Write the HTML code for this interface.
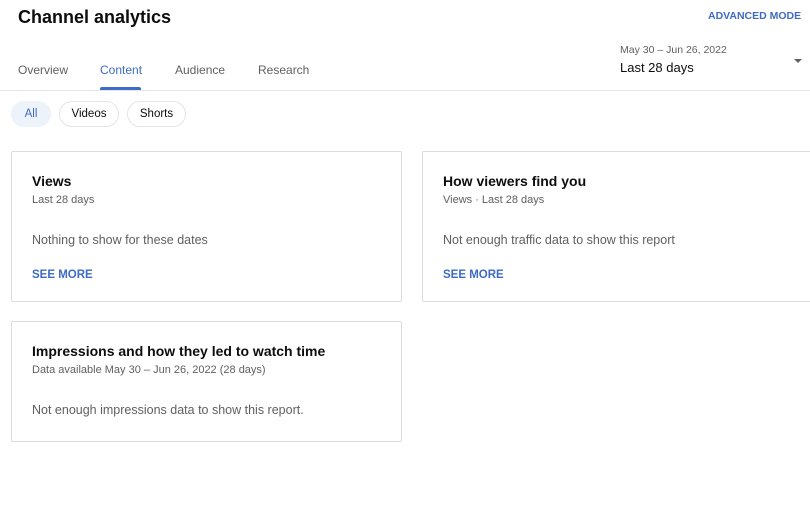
<!DOCTYPE html>
<html><head><style>
body{margin:0;width:810px;height:507px;background:#fff;font-family:"Liberation Sans",sans-serif;position:relative;overflow:hidden;color:#0d0d0d}
.a{position:absolute;white-space:nowrap}
.tab{top:63px;font-size:12px;color:#606060}
.chip{position:absolute;top:101px;height:26px;border-radius:13px;border:1px solid #e5e5e5;box-sizing:border-box;font-size:11.5px;line-height:24px;text-align:center;color:#0d0d0d}
.card{position:absolute;border:1px solid #dcdcdc;border-radius:2px;box-sizing:border-box}
.card .t{position:absolute;left:20px;top:21px;font-size:14px;font-weight:bold;color:#0d0d0d;white-space:nowrap}
.card .s{position:absolute;left:20px;top:42px;font-size:11px;color:#606060;white-space:nowrap}
.card .b{position:absolute;left:20px;top:81px;font-size:12.5px;color:#606060;white-space:nowrap}
.card .m{position:absolute;left:20px;top:117px;font-size:11.5px;font-weight:bold;color:#3e6bc7;white-space:nowrap}
</style></head><body>
<div class="a" style="left:18px;top:7px;font-size:18px;font-weight:bold">Channel analytics</div>
<div class="a" style="left:708px;top:10px;font-size:10.5px;font-weight:bold;color:#3e6bc7">ADVANCED MODE</div>
<div class="a" style="left:620px;top:44px;font-size:10.5px;color:#606060">May 30 – Jun 26, 2022</div>
<div class="a" style="left:620px;top:60px;font-size:13px;color:#0d0d0d">Last 28 days</div>
<div class="a" style="left:794px;top:59px;width:0;height:0;border-left:4px solid transparent;border-right:4px solid transparent;border-top:4px solid #606060"></div>
<div class="a tab" style="left:18px">Overview</div>
<div class="a tab" style="left:100px;color:#3e6bc7">Content</div>
<div class="a tab" style="left:175px">Audience</div>
<div class="a tab" style="left:258px">Research</div>
<div class="a" style="left:100px;top:87px;width:41px;height:3px;background:#3e6bc7;border-radius:2px 2px 0 0"></div>
<div class="a" style="left:0;top:90px;width:810px;height:1px;background:#e5e5e5"></div>
<div class="chip" style="left:11px;width:40px;background:#edf3fb;border-color:#edf3fb;color:#3e6bc7">All</div>
<div class="chip" style="left:59px;width:60px">Videos</div>
<div class="chip" style="left:127px;width:59px">Shorts</div>
<div class="card" style="left:11px;top:151px;width:391px;height:151px">
<div class="t">Views</div><div class="s">Last 28 days</div><div class="b">Nothing to show for these dates</div><div class="m">SEE MORE</div></div>
<div class="card" style="left:422px;top:151px;width:400px;height:151px">
<div class="t">How viewers find you</div><div class="s">Views · Last 28 days</div><div class="b">Not enough traffic data to show this report</div><div class="m">SEE MORE</div></div>
<div class="card" style="left:11px;top:321px;width:391px;height:121px">
<div class="t">Impressions and how they led to watch time</div><div class="s">Data available May 30 – Jun 26, 2022 (28 days)</div><div class="b">Not enough impressions data to show this report.</div></div>
</body></html>
